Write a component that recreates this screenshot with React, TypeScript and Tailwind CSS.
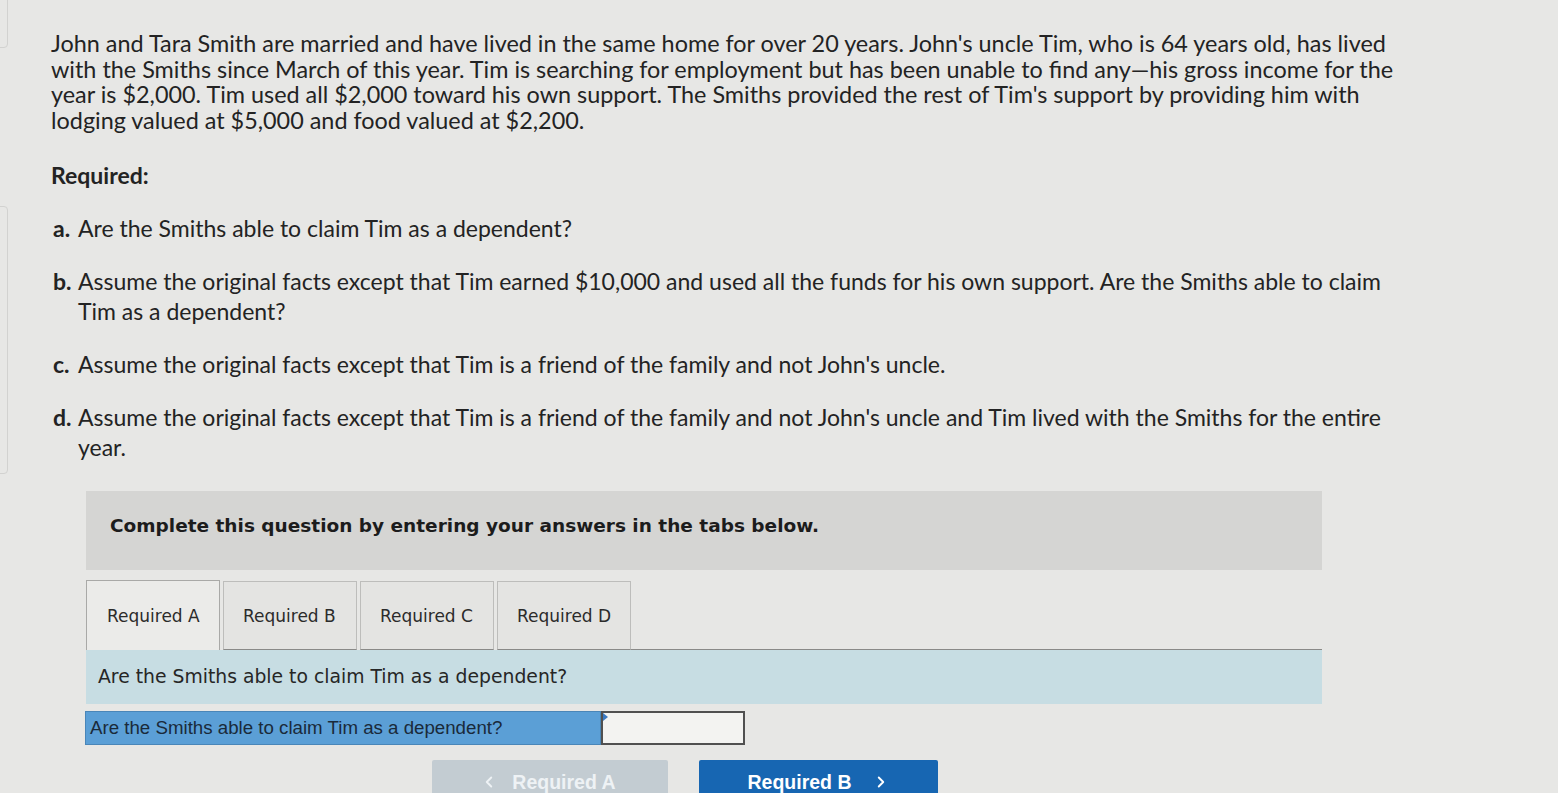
import React from 'react';
import { ChevronLeft, ChevronRight } from 'lucide-react';

const tabs = ['Required A', 'Required B', 'Required C', 'Required D'];

const items = [
  { label: 'a.', lines: ['Are the Smiths able to claim Tim as a dependent?'] },
  {
    label: 'b.',
    lines: [
      'Assume the original facts except that Tim earned $10,000 and used all the funds for his own support. Are the Smiths able to claim',
      'Tim as a dependent?',
    ],
  },
  { label: 'c.', lines: ["Assume the original facts except that Tim is a friend of the family and not John's uncle."] },
  {
    label: 'd.',
    lines: [
      "Assume the original facts except that Tim is a friend of the family and not John's uncle and Tim lived with the Smiths for the entire",
      'year.',
    ],
  },
];

const App: React.FC = () => {
  return (
    <div className="relative w-[1558px] h-[793px] overflow-hidden bg-[#e7e7e5] text-[#232323]">
      {/* faint outlines at the left edge of the photo */}
      <div className="absolute left-[-6px] top-[-4px] w-[14px] h-[52px] border border-[#d2d2d0] rounded" />
      <div className="absolute left-[-6px] top-[206px] w-[14px] h-[268px] border border-[#d2d2d0] rounded" />

      <div className="pl-[51px] pt-[31px]" style={{ fontFamily: 'Lato, "Open Sans", sans-serif' }}>
        <p className="text-[23.4px] leading-[25.7px] whitespace-nowrap">
          John and Tara Smith are married and have lived in the same home for over 20 years. John's uncle Tim, who is 64 years old, has lived
          <br />
          with the Smiths since March of this year. Tim is searching for employment but has been unable to find any—his gross income for the
          <br />
          year is $2,000. Tim used all $2,000 toward his own support. The Smiths provided the rest of Tim's support by providing him with
          <br />
          lodging valued at $5,000 and food valued at $2,200.
        </p>

        <p className="mt-[28px] text-[23px] leading-[26px] font-bold">Required:</p>

        <div className="mt-[25px] flex flex-col gap-[23px]">
          {items.map(item => (
            <div key={item.label} className="flex text-[23px] leading-[30px] whitespace-nowrap">
              <span className="w-[27px] pl-[2px] font-bold">{item.label}</span>
              <div>
                {item.lines.map((l, i) => (
                  <div key={i}>{l}</div>
                ))}
              </div>
            </div>
          ))}
        </div>
      </div>

      {/* question box */}
      <div className="ml-[86px] mt-[29px] w-[1236px]">
        <div className="h-[79px] bg-[#d5d5d3] pl-[24px] pt-[21px]">
          <p
            className="text-[18.5px] font-bold text-[#1c1c1c]"
            style={{ fontFamily: '"DejaVu Sans", Verdana, sans-serif' }}
          >
            Complete this question by entering your answers in the tabs below.
          </p>
        </div>

        <div className="mt-[10px] flex items-end" style={{ fontFamily: '"DejaVu Sans", Verdana, sans-serif' }}>
          {tabs.map((t, i) => (
            <div
              key={t}
              className={
                i === 0
                  ? 'h-[70px] w-[134px] border border-b-0 border-[#a9a9a7] bg-[#ebebe9] pl-[20px] flex items-center text-[17px] text-[#2b2b2b]'
                  : 'h-[69px] w-[134px] ml-[3px] border border-[#bdbdbb] border-b-[#8a8a88] bg-[#e4e4e2] pl-[19px] flex items-center text-[17px] text-[#2b2b2b]'
              }
            >
              <span className="mt-[3px]">{t}</span>
            </div>
          ))}
          <div className="flex-1 border-b border-[#8a8a88]" />
        </div>

        <div
          className="h-[54px] bg-[#c7dde3] pl-[12px] flex items-center text-[18.8px] text-[#262626]"
          style={{ fontFamily: '"DejaVu Sans", Verdana, sans-serif' }}
        >
          Are the Smiths able to claim Tim as a dependent?
        </div>

        <div className="mt-[7px] flex h-[34px]" style={{ fontFamily: '"Liberation Sans", Arial, sans-serif' }}>
          <div className="-ml-[1px] w-[516px] bg-[#5b9fd6] border border-[#4a86b8] pl-[4px] flex items-center text-[18.7px] text-[#1a2a3a]">
            Are the Smiths able to claim Tim as a dependent?
          </div>
          <div className="relative w-[144px] bg-[#f3f3f1] border-2 border-[#505050]">
            <span className="absolute left-[0px] top-[0px] w-0 h-0 border-t-[4px] border-b-[4px] border-l-[5px] border-t-transparent border-b-transparent border-l-[#3a78c0]" />
          </div>
        </div>

        <div
          className="mt-[15px] ml-[346px] flex gap-[31px] text-[19.5px] font-bold text-white"
          style={{ fontFamily: '"Liberation Sans", Arial, sans-serif' }}
        >
          <div className="w-[236px] h-[40px] bg-[#c3ccd2] rounded-t-[2px] flex items-start justify-center pt-[11px] leading-[22px] text-[#eef2f5]">
            <ChevronLeft size={18} strokeWidth={2.5} className="mt-[2px] mr-[14px] -ml-[4px]" />
            <span>Required A</span>
          </div>
          <div className="w-[239px] h-[40px] bg-[#1766b2] rounded-t-[2px] flex items-start justify-center pt-[11px] leading-[22px]">
            <span>Required B</span>
            <ChevronRight size={18} strokeWidth={2.5} className="mt-[2px] ml-[20px]" />
          </div>
        </div>
      </div>
    </div>
  );
};

export default App;
